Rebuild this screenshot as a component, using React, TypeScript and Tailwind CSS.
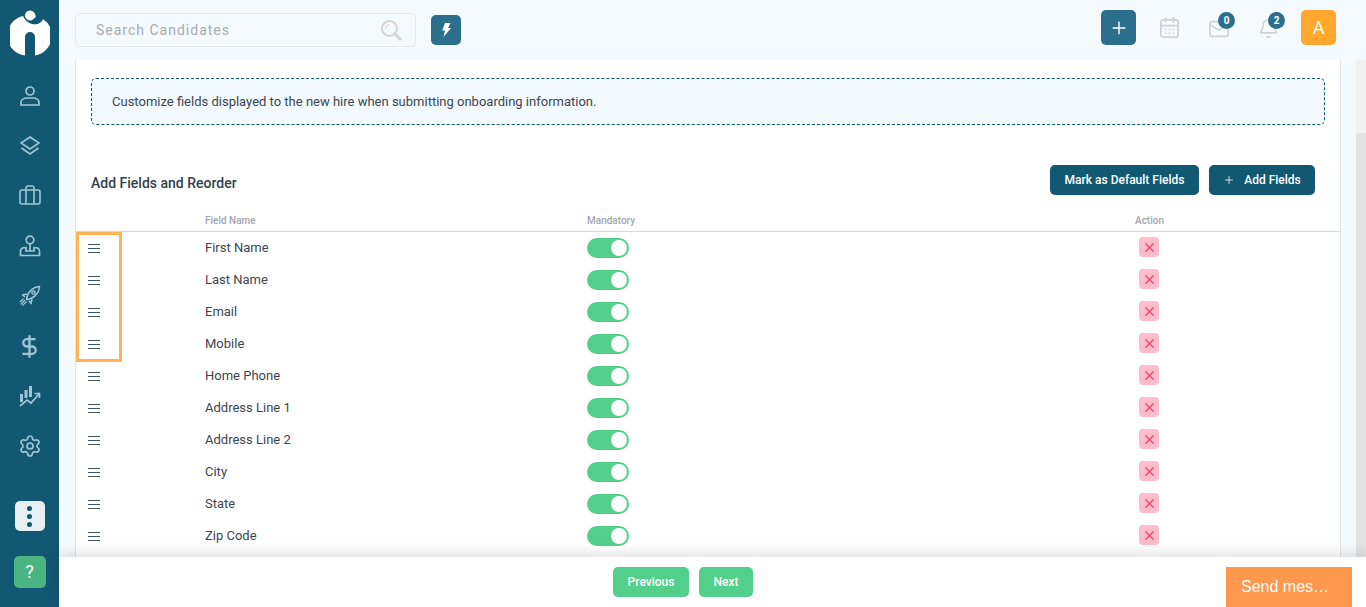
import React from "react";
import { CalendarDays, Mail, Bell, Plus, X, Briefcase, DollarSign, Settings } from "lucide-react";

const fields = [
  "First Name",
  "Last Name",
  "Email",
  "Mobile",
  "Home Phone",
  "Address Line 1",
  "Address Line 2",
  "City",
  "State",
  "Zip Code",
];

const Logo = () => (
  <svg width="40" height="46" viewBox="0 0 40 46" className="mt-[10px] shrink-0">
    <path d="M13 6 A20 20 0 0 0 15 45.4 V27 A5 5 0 0 1 25 27 V45.4 A20 20 0 0 0 33 9 C31 16 18 17 13 6 Z" fill="#fff" />
    <path d="M20 0.5 A5 5 0 1 0 23 9.5 L26 6.5 L24.5 3 A5 5 0 0 0 20 0.5 Z" fill="#fff" />
  </svg>
);

const Person = () => (
  <svg width="20" height="20" viewBox="0 0 20 20" fill="none" stroke="currentColor" strokeWidth="1.7">
    <circle cx="10" cy="5" r="4" />
    <path d="M1 19 V16.5 C1 13.5 4 12 7 12 H13 C16 12 19 13.5 19 16.5 V19 Z" strokeLinejoin="round" />
  </svg>
);

const Stack = () => (
  <svg width="20" height="20" viewBox="0 0 20 20" fill="none" stroke="currentColor" strokeWidth="1.7" strokeLinejoin="miter">
    <path d="M10 1 L19 7 L10 13 L1 7 Z" />
    <path d="M1.5 12 L10 18 L18.5 12" />
  </svg>
);

const PersonTie = () => (
  <svg width="22" height="22" viewBox="0 0 22 22" fill="none" stroke="currentColor" strokeWidth="1.7">
    <circle cx="11" cy="5" r="3.8" />
    <path d="M1.5 20.5 V16 C1.5 13.5 4 12.5 7 12.5 V16 H15 V12.5 C18 12.5 20.5 13.5 20.5 16 V20.5 Z" />
    <path d="M11 9 V16" />
  </svg>
);

const RocketIcon = () => (
  <svg width="22" height="22" viewBox="0 0 22 22" fill="none" stroke="currentColor" strokeWidth="1.5" strokeLinejoin="round">
    <path d="M7.5 14.5 C8 8 13 2 20.5 1.5 C20 9 14 14 7.5 14.5 Z" />
    <circle cx="14.5" cy="7.5" r="1.6" />
    <path d="M8 9 L3.5 10 L6 12 M13 14 L12 18.5 L10 16" />
    <path d="M6 15 L1.5 19.5 M7.5 16.5 L3.5 20.5 M4.5 13.5 L1 17" strokeWidth="1.2" />
  </svg>
);

const Chart = () => (
  <svg width="22" height="22" viewBox="0 0 22 22" fill="none" stroke="currentColor" strokeWidth="1.7">
    <path d="M2.5 17 V9 M7 13 V5 M11.5 12 V1" strokeWidth="3" />
    <path d="M1 21 L8 15 L12 18 L20 9 M15.5 8.5 H20.5 V13" />
  </svg>
);

const SearchGlass = () => (
  <svg width="22" height="22" viewBox="0 0 22 22" fill="none" stroke="#d4d4d4">
    <circle cx="9.5" cy="9.5" r="7.5" strokeWidth="2" />
    <path d="M15.5 15.5 L20 20" strokeWidth="3" strokeLinecap="round" />
    <path d="M5.5 9.5 A4 4 0 0 1 9.5 5.5" strokeWidth="1" />
  </svg>
);

const Bolt = () => (
  <svg width="10" height="14" viewBox="0 0 10 14" fill="#fff">
    <path d="M4 0 H9.5 L7 5 H10 L2.5 14 L4 7.5 H1.2 Z" />
  </svg>
);

const Grip = () => (
  <svg width="12" height="9" viewBox="0 0 12 9" stroke="#3f5566" strokeWidth="1" shapeRendering="crispEdges">
    <path d="M0 0.5 H12 M0 4.5 H12 M0 8.5 H12" />
  </svg>
);

const navItems = [
  <Person key="person" />,
  <Stack key="stack" />,
  <Briefcase key="case" size={24} strokeWidth={1.6} />,
  <PersonTie key="tie" />,
  <RocketIcon key="rocket" />,
  <DollarSign key="dollar" size={25} strokeWidth={2.2} />,
  <Chart key="chart" />,
  <Settings key="gear" size={24} strokeWidth={1.7} />,
];

const Sidebar = () => (
  <aside className="w-[59px] shrink-0 h-full bg-[#125873] flex flex-col items-center">
    <Logo />
    <div className="mt-[15px] flex flex-col items-center text-[#9fc6d6]">
      {navItems.map((icon) => (
        <div key={icon.key} className="h-[50px] flex items-center justify-center">
          {icon}
        </div>
      ))}
    </div>
    <div className="mt-[30px] w-[30px] h-[30px] rounded-[5px] bg-[#e8eff3] flex flex-col items-center justify-center gap-[3px]">
      <span className="w-[5px] h-[5px] rounded-full bg-[#125873]" />
      <span className="w-[5px] h-[5px] rounded-full bg-[#125873]" />
      <span className="w-[5px] h-[5px] rounded-full bg-[#125873]" />
    </div>
    <div className="mt-[25px] w-8 h-8 rounded-[5px] bg-[#4ab583] flex items-center justify-center text-white text-lg">?</div>
  </aside>
);

const Topbar = () => (
  <header className="h-[60px] shrink-0 bg-[#f5faff] flex items-center pl-4 pr-[30px]">
    <div className="w-[341px] h-[34px] rounded-[5px] border border-[#e4e8ec] flex items-center justify-between pl-5 pr-[13px]">
      <span className="text-sm tracking-[1px] text-[#a8abb0]">Search Candidates</span>
      <SearchGlass />
    </div>
    <div className="ml-[15px] w-[30px] h-[30px] rounded-[5px] bg-[#2b6f8d] flex items-center justify-center">
      <Bolt />
    </div>
    <div className="ml-auto mb-[5px] flex items-center">
      <div className="w-[35px] h-[35px] rounded-[5px] bg-[#2b6f8d] flex items-center justify-center">
        <Plus size={20} strokeWidth={1.7} className="text-white" />
      </div>
      <CalendarDays size={23} strokeWidth={1.8} className="ml-[22px] text-[#cfd1d5]" />
      <div className="relative ml-[27px] w-5 h-5">
        <Mail size={22} strokeWidth={1.8} className="text-[#cfd1d5]" />
        <span className="absolute -top-[6px] left-[10px] w-[17px] h-[17px] rounded-full bg-[#2b6f8d] text-white text-[10px] font-bold flex items-center justify-center">0</span>
      </div>
      <div className="relative ml-[30px] w-5 h-5">
        <Bell size={21} strokeWidth={1.8} className="text-[#cfd1d5]" />
        <span className="absolute -top-[6px] left-[10px] w-[17px] h-[17px] rounded-full bg-[#2b6f8d] text-white text-[10px] font-bold flex items-center justify-center">2</span>
      </div>
      <div className="ml-[23px] w-[35px] h-[35px] rounded-[5px] bg-[#ffa72e] flex items-center justify-center text-white text-lg">A</div>
    </div>
  </header>
);

const Row = ({ name }: { name: string }) => (
  <div className="h-8 flex items-center text-[13px] text-[#3c4650]">
    <div className="w-[129px] shrink-0 pl-[12px] flex items-center">
      <Grip />
    </div>
    <div className="w-[382px] shrink-0">{name}</div>
    <div className="w-[42px] h-5 shrink-0 rounded-full bg-[#52cf8b] flex items-center justify-end pr-[2px]">
      <span className="w-4 h-4 rounded-full bg-white" />
    </div>
    <div className="ml-[510px] mb-[2px] w-5 h-5 rounded-[4px] bg-[#ffbccb] flex items-center justify-center">
      <X size={15} strokeWidth={2.2} className="text-[#f5476f]" />
    </div>
  </div>
);

export default function App() {
  return (
    <div className="w-[1366px] h-[607px] overflow-hidden flex bg-[#f5faff] font-['Roboto',sans-serif]">
      <Sidebar />
      <div className="flex-1 min-w-0 h-full flex flex-col">
        <Topbar />
        <div className="flex-1 min-h-0 flex">
          <main className="relative ml-4 w-[1266px] bg-white border-x border-[#e3e3e3] overflow-hidden">
            <div className="mx-[15px] mt-[18px] h-[47px] rounded-[5px] border border-dashed border-[#125873] bg-[#f2f9ff] flex items-center pl-5 text-[13px] text-[#3c4650]">
              Customize fields displayed to the new hire when submitting onboarding information.
            </div>
            <div className="mt-10 h-[30px] flex items-center justify-between pl-[15px] pr-[25px]">
              <h2 className="pt-[6px] text-sm font-medium text-[#333f4a]">Add Fields and Reorder</h2>
              <div className="flex gap-[10px]">
                <button className="h-[30px] w-[149px] rounded-[5px] bg-[#125873] text-white text-xs font-medium">Mark as Default Fields</button>
                <button className="h-[30px] w-[106px] rounded-[5px] bg-[#125873] text-white text-xs font-medium flex items-center justify-center gap-[9px]">
                  <Plus size={12} strokeWidth={1.5} />
                  Add Fields
                </button>
              </div>
            </div>
            <div className="relative mt-[11px]">
              <div className="h-[26px] pt-[4px] flex items-center border-b border-[#d8d8d8] text-[10px] font-medium text-[#a3a6ae]">
                <span className="ml-[129px] w-[382px]">Field Name</span>
                <span className="w-[548px]">Mandatory</span>
                <span>Action</span>
              </div>
              {fields.map((f) => (
                <Row key={f} name={f} />
              ))}
              <div className="absolute left-0 top-[26px] w-[46px] h-[130px] border-[3px] border-[#ffb454]" />
            </div>
          </main>
          <div className="ml-[15px] flex-1 flex flex-col">
            <div className="h-[73px] bg-[#f1f1f1]" />
            <div className="flex-1 bg-[#e3e3e3]" />
          </div>
        </div>
        <footer className="relative h-[50px] shrink-0 bg-white flex items-center justify-center gap-[10px] pr-[59px] shadow-[0_-4px_12px_rgba(0,0,0,0.12)]">
          <button className="w-[76px] h-[30px] rounded-[5px] bg-[#52cf8b] text-white text-xs font-medium">Previous</button>
          <button className="w-[54px] h-[30px] rounded-[5px] bg-[#52cf8b] text-white text-xs font-medium">Next</button>
          <div className="absolute right-[14px] bottom-0 w-[126px] h-10 bg-[#ff974d] flex items-center pl-[15px] text-white text-base font-['Liberation_Sans',sans-serif]">Send mes…</div>
        </footer>
      </div>
    </div>
  );
}
